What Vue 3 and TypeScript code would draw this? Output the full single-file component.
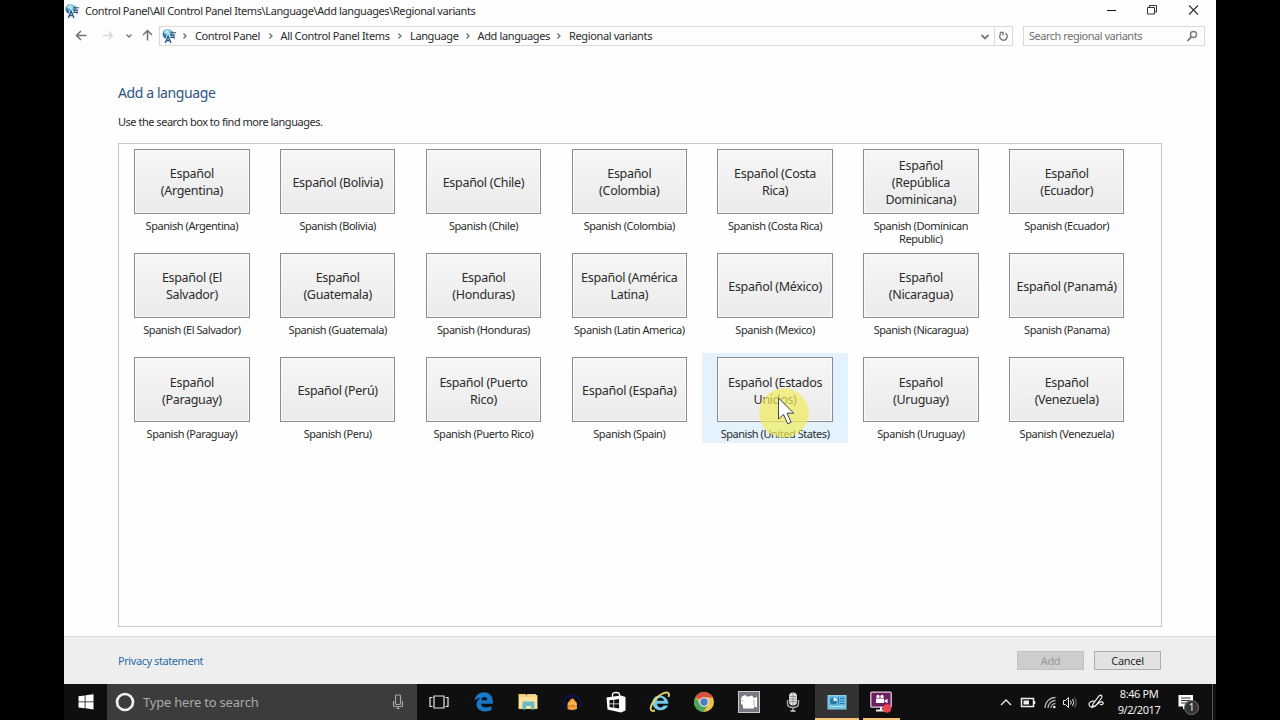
<script setup lang="ts">
interface Variant {
  lines: string[]
  label: string[]
  hover?: boolean
}

const crumbs: { text: string; width: number }[] = [
  { text: 'Control Panel', width: 66.5 },
  { text: 'All Control Panel Items', width: 110.5 },
  { text: 'Language', width: 48.5 },
  { text: 'Add languages', width: 72.5 },
  { text: 'Regional variants', width: 82 },
]

const variants: Variant[] = [
  { lines: ['Español', '(Argentina)'], label: ['Spanish (Argentina)'] },
  { lines: ['Español (Bolivia)'], label: ['Spanish (Bolivia)'] },
  { lines: ['Español (Chile)'], label: ['Spanish (Chile)'] },
  { lines: ['Español', '(Colombia)'], label: ['Spanish (Colombia)'] },
  { lines: ['Español (Costa', 'Rica)'], label: ['Spanish (Costa Rica)'] },
  { lines: ['Español', '(República', 'Dominicana)'], label: ['Spanish (Dominican', 'Republic)'] },
  { lines: ['Español', '(Ecuador)'], label: ['Spanish (Ecuador)'] },
  { lines: ['Español (El', 'Salvador)'], label: ['Spanish (El Salvador)'] },
  { lines: ['Español', '(Guatemala)'], label: ['Spanish (Guatemala)'] },
  { lines: ['Español', '(Honduras)'], label: ['Spanish (Honduras)'] },
  { lines: ['Español (América', 'Latina)'], label: ['Spanish (Latin America)'] },
  { lines: ['Español (México)'], label: ['Spanish (Mexico)'] },
  { lines: ['Español', '(Nicaragua)'], label: ['Spanish (Nicaragua)'] },
  { lines: ['Español (Panamá)'], label: ['Spanish (Panama)'] },
  { lines: ['Español', '(Paraguay)'], label: ['Spanish (Paraguay)'] },
  { lines: ['Español (Perú)'], label: ['Spanish (Peru)'] },
  { lines: ['Español (Puerto', 'Rico)'], label: ['Spanish (Puerto Rico)'] },
  { lines: ['Español (España)'], label: ['Spanish (Spain)'] },
  { lines: ['Español (Estados', 'Unidos)'], label: ['Spanish (United States)'], hover: true },
  { lines: ['Español', '(Uruguay)'], label: ['Spanish (Uruguay)'] },
  { lines: ['Español', '(Venezuela)'], label: ['Spanish (Venezuela)'] },
]
</script>

<template>
  <div class="screen">
    <svg class="defs" width="0" height="0" aria-hidden="true">
      <defs>
        <radialGradient id="globeFill" cx=".6" cy=".3" r=".8">
          <stop offset="0" stop-color="#a9e3f5" />
          <stop offset=".5" stop-color="#3b9cc9" />
          <stop offset="1" stop-color="#1b4f7c" />
        </radialGradient>
        <symbol id="globe" viewBox="0 0 16 16">
          <circle cx="6" cy="6" r="5.3" fill="url(#globeFill)" />
          <path d="M2 3.500q3-2.500 5-1.500l-1 2.500-3 1zM7 7l3-1 0 3-2 1z" fill="#c4e9df" />
          <path d="M9 4.500h6M8.500 7h5.500M9 9.500h5" stroke="#2a5078" stroke-width="1.200" />
          <path d="M11 2.500l2 9" stroke="#456f8d" stroke-width=".8" />
          <path d="M3.500 15.500L6.500 8l3 7.500M4.500 12.800h4" fill="none" stroke="#fff" stroke-width="3" />
          <path d="M3.500 15.500L6.500 8l3 7.500M4.500 12.800h4" fill="none" stroke="#245b8c" stroke-width="1.500" />
        </symbol>
      </defs>
    </svg>

    <main class="window">
      <header class="titlebar">
        <svg class="app-icon" width="15" height="16"><use href="#globe" /></svg>
        <span class="title">Control Panel\All Control Panel Items\Language\Add languages\Regional variants</span>
        <div class="controls">
          <svg width="41" height="20" viewBox="0 0 41 20"><path d="M16 9.500h9" stroke="#111" /></svg>
          <svg width="41" height="20" viewBox="0 0 41 20" fill="none" stroke="#333"><path d="M15.500 6.500h7v6.500h-7zM17.500 6V4.500H24.500v6.500h-2" /></svg>
          <svg width="41" height="20" viewBox="0 0 41 20"><path d="M16 4.500l9 9M25 4.500l-9 9" stroke="#333" stroke-width="1.100" /></svg>
        </div>
      </header>

      <nav class="navbar">
        <svg class="arrows" width="95" height="20" viewBox="0 0 95 20" fill="none">
          <path d="M22.500 10.500H12.500M17 6l-4.500 4.500L17 15" stroke="#707070" stroke-width="1.500" />
          <path d="M38.500 10.500h10M44.500 6.500l4 4-4 4" stroke="#d8d8d8" stroke-width="1.300" />
          <path d="M62.500 9.500l2.500 2.500 2.500-2.500" stroke="#777" stroke-width="1.400" />
          <path d="M83.500 15.500V6M79 10l4.500-4.500L88 10" stroke="#707070" stroke-width="1.500" />
        </svg>
        <div class="address">
          <svg class="address-icon" width="15" height="16"><use href="#globe" /></svg>
          <template v-for="crumb in crumbs" :key="crumb.text">
            <svg class="chevron" width="19" height="18" viewBox="0 0 19 18"><path d="M7.500 6.500L10 9l-2.500 2.500" fill="none" stroke="#666" stroke-width="1.200" /></svg>
            <span class="crumb" :style="{ width: crumb.width + 'px' }">{{ crumb.text }}</span>
          </template>
          <div class="address-end">
            <svg width="18" height="18" viewBox="0 0 18 18"><path d="M5.500 8l3.500 3.500L12.500 8" fill="none" stroke="#777" stroke-width="1.800" /></svg>
            <svg class="refresh" width="18" height="18" viewBox="0 0 18 18" fill="none" stroke="#777" stroke-width="1.500"><path d="M11 6a4 4 0 1 1-4.500.3" /><path d="M5 5.200h3.500v3.300" /></svg>
          </div>
        </div>
        <div class="search">
          <span>Search regional variants</span>
          <svg width="14" height="14" viewBox="0 0 14 14" fill="none" stroke="#777" stroke-width="1.400"><circle cx="8.500" cy="5.500" r="3" /><path d="M6.300 7.800L2.500 12" stroke-width="1.800" /></svg>
        </div>
      </nav>

      <section class="content">
        <h1>Add a language</h1>
        <p class="hint">Use the search box to find more languages.</p>
        <div class="list">
          <div v-for="item in variants" :key="item.label.join(' ')" class="cell" :class="{ hover: item.hover }">
            <div class="tile"><span v-for="line in item.lines" :key="line">{{ line }}</span></div>
            <div class="label"><span v-for="line in item.label" :key="line">{{ line }}</span></div>
            <svg v-if="item.hover" class="pointer" width="52" height="50" viewBox="0 0 52 50">
              <circle cx="25" cy="25" r="24.700" fill="#f1ed5c" opacity=".7" />
              <path d="M19.500 10v21l5-4.500 4.200 9.300 3.500-1.600-4.200-9h6.800z" fill="#fff" stroke="#444" />
            </svg>
          </div>
        </div>
      </section>

      <footer class="footer">
        <a class="privacy">Privacy statement</a>
        <button class="btn disabled" disabled>Add</button>
        <button class="btn">Cancel</button>
      </footer>
    </main>

    <div class="taskbar">
      <div class="start">
        <svg width="16" height="16" viewBox="0 0 16 16" fill="#fff"><path d="M.5 2.300L6.700 1.400v6H.5zM7.500 1.300L15.500.2v7.200h-8zM.5 8.200h6.200v6L.5 13.400zM7.500 8.200h8v7.200l-8-1.100z" /></svg>
      </div>
      <div class="cortana">
        <svg width="20" height="20" viewBox="0 0 20 20"><circle cx="10" cy="10" r="8" fill="none" stroke="#eee" stroke-width="2.700" /></svg>
        <span>Type here to search</span>
        <svg class="mic" width="12" height="18" viewBox="0 0 12 18" fill="none" stroke="#a5a5a5" stroke-width="1.200"><rect x="3.500" y="2" width="5" height="9.500" rx="1" /><path d="M1.500 8v4.500q0 1 1 1h7q1 0 1-1V8M6 13.500V16M4.500 15.500h3" /></svg>
      </div>

      <div class="apps">
        <div class="app"><svg width="22" height="22" viewBox="0 0 22 22" fill="none" stroke="#e8e8e8" stroke-width="1.200"><path d="M6 5h10v12H6zM4.500 6.500H2v9h2.500M17.500 6.500H20v9h-2.500" /></svg></div>
        <div class="app nudge"><svg width="22" height="22" viewBox="0 0 22 22"><path d="M1.500 10C2.300 4.300 6.200 1.300 11 1.300c5.500 0 9 4 8.800 9.200v2.200H8c.2 4.100 6.200 5 10.400 2.400v4C13 22 3.500 20.500 3.500 13.200c0-2.800 1.700-5 4.200-6.200C4.800 7.200 2.700 8.300 1.500 10zM8.200 9.300h6.100c0-4.700-5.600-4.200-6.100 0z" fill="#1878c8" fill-rule="evenodd" /></svg></div>
        <div class="app folder"><svg width="22" height="22" viewBox="0 0 22 22"><path d="M1.500 3h7l1 1h11v14h-19z" fill="#f3cd78" /><path d="M2 6h18v11.500H2z" fill="#fbe0a0" /><path d="M5.500 18.500v-7q0-1 1-1h10q1 0 1 1v7h-3.500v-3.500h-5v3.500z" fill="#69b9c8" /><path d="M10 3.700h9" stroke="#fff5d6" /></svg></div>
        <div class="app"><svg width="22" height="22" viewBox="0 0 22 22"><path d="M4 17C0 9 5 4.500 11 4.500s11 4.500 7 12.500" fill="none" stroke="#0d1052" stroke-width="1.800" /><path d="M6.500 18v-5q0-2 2-3 1-2.500 3-2.500t2.500 2.500q2 1 2 3v5q-5 2-9.500 0z" fill="#f3a33a" /><path d="M8.500 12v4M10.500 10v3M12.500 10v3M14.500 12v4" stroke="#ffc966" /><path d="M7 15h9" stroke="#bd5a20" stroke-width=".8" /></svg></div>
        <div class="app"><svg width="22" height="22" viewBox="0 0 22 22"><path d="M7.500 6V3.500q0-2 3.500-2t3.500 2V6" fill="none" stroke="#fff" stroke-width="1.300" /><path d="M1.500 6.500L16 4.500V21.500L2.500 18.500zM16 4.500l4.500 1.500v13.500l-4.500 2z" fill="#fff" /><path d="M4.500 9.300l3.900-.5v3.600H4.500zM9.200 8.700l4.800-.6v4.300H9.200zM4.500 13.200h3.900v3.500l-3.900-.6zM9.200 13.200H14v4.400l-4.800-.8z" fill="#111" /></svg></div>
        <div class="app"><svg width="22" height="22" viewBox="0 0 22 22"><path d="M19.500 12.700H8c.4 4.300 5 4.800 6.600 1.800h4.500C16.500 21.500 3.500 21 3.500 11.500S18.500 2 19.500 12.700zM8 9.700h7c-.6-3.800-6.400-3.800-7 0z" fill="#72c9ea" fill-rule="evenodd" /><path d="M6 19.500C1 21 .5 17.500 3.500 12 7.500 5.500 15 .8 18.500 1.700c1.800.5 1.800 2.300 1 4.300" fill="none" stroke="#e6d36a" stroke-width="1.900" /></svg></div>
        <div class="app"><svg width="22" height="22" viewBox="0 0 22 22"><circle cx="11" cy="11" r="10" fill="#efc04b" /><path d="M11 11L2.400 6A10 10 0 0 1 19.900 6.500H11z" fill="#d9503f" /><path d="M2.400 6A10 10 0 0 0 10.500 21L15 13.200H7z" fill="#4ba55d" /><circle cx="11" cy="11" r="4.800" fill="#eee" /><circle cx="11" cy="11" r="3.700" fill="#477fc8" /></svg></div>
        <div class="app nudge"><svg width="22" height="22" viewBox="0 0 22 22"><rect x=".5" y=".5" width="21" height="21" fill="#777a82" stroke="#c9cad0" /><path d="M3 8l1-2.500 3-1.500 2 1.500h2l3-1 2 2.500 3-1v10.500l-3-1v2H5V14L3 13z" fill="#fff" /><path d="M3.500 9.500h2M16 8.500v6" stroke="#a9abb2" /></svg></div>
        <div class="app"><svg width="22" height="22" viewBox="0 0 22 22"><rect x="7" y="1.500" width="8" height="13" rx="4" fill="#ddd" /><path d="M7.500 5.500h7M7.500 8h7M7.500 10.500h7M11 2v12" stroke="#888" stroke-width=".8" /><path d="M5.500 9v3.500q0 4 5.500 4t5.500-4V9M11 16.500V20" fill="none" stroke="#aaa" stroke-width="1.400" /><path d="M8.500 20h5" stroke="#ccc" stroke-width="1.500" /></svg></div>
        <div class="app active"><svg width="22" height="22" viewBox="0 0 22 22"><rect x="2" y="4.500" width="18" height="13.500" fill="#68bce2" stroke="#8fd0ec" /><circle cx="7.500" cy="10" r="3.500" fill="#2878aa" /><path d="M7.500 10V6.500A3.500 3.500 0 0 1 11 10z" fill="#e6f7ff" /><path d="M14 7.500h4.500M14 10h4.500M14 12.500h4.500" stroke="#2878aa" stroke-width="1.200" /><path d="M4 15.500h14" stroke="#b9e4f5" /><path d="M12.500 6.500v7" stroke="#2878aa" /></svg></div>
        <div class="app running"><svg width="24" height="22" viewBox="0 0 24 22"><rect x="1.800" y="1.200" width="20.400" height="15" rx="1" fill="#701e62" stroke="#e3c9df" stroke-width="1.300" /><path d="M12 16v3M7 19.500h10" stroke="#eee" stroke-width="2" /><circle cx="9" cy="5.500" r="1.700" fill="#fff" /><circle cx="13" cy="5.500" r="1.700" fill="#fff" /><path d="M7 7.500h8v4.500H7zM15.500 9.500l3-1.700v4.500l-3-1.700z" fill="#fff" /><circle cx="18" cy="17.500" r="4.300" fill="#e8454e" /></svg></div>
      </div>

      <div class="tray">
        <svg width="105" height="36" viewBox="0 0 105 36" fill="none" stroke="#eee">
          <path d="M1 21l5-5 5 5" stroke-width="1.300" />
          <rect x="21.500" y="14.500" width="12" height="8" stroke-width="1.500" /><path d="M34.500 17v3" stroke-width="1.500" /><path d="M23.500 16.500h5.500v4h-5.500z" fill="#eee" stroke="none" />
          <path d="M45 24A10.500 10.500 0 0 1 55.500 13.500M48 24a7.500 7.500 0 0 1 7.500-7.500M51 24a4.500 4.500 0 0 1 4.500-4.500" stroke="#aaa" stroke-width="1.300" /><circle cx="54.300" cy="23" r="1.300" fill="#eee" stroke="none" />
          <path d="M63.500 16.500h2l3-3v10l-3-3h-2zM70.500 16.500q1.500 2 0 4M72.500 15q2.500 3.500 0 7" /><path d="M74.500 13.500q3.500 5 0 10" stroke="#777" />
          <path d="M92 23.500l1-3.500 6-8q1.500-1.500 2.500-.5t0 2.500l-6 8zM95 17.500c-3.500-1-6.500 1-6 3.500s4.500 2.500 8-.5 5-3.500 6-2-1 2.500-3 2" stroke-width="1.200" />
        </svg>
        <div class="clock"><span>8:46 PM</span><span>9/2/2017</span></div>
        <div class="notice">
          <svg width="18" height="18" viewBox="0 0 18 18"><path d="M1.500 2h14.500v11.500H9l-3 3v-3H1.500z" fill="#fff" /><path d="M4 5h9.500M4 7.500h9.500M4 10h6" stroke="#333" /></svg>
          <span class="badge">1</span>
        </div>
        <div class="peek"></div>
      </div>
    </div>
  </div>
</template>

<style>
body {
  background: #000;
  overflow: hidden;
}
</style>

<style scoped>
.screen {
  width: 1152px;
  height: 720px;
  margin: 0 64px;
  display: flex;
  flex-direction: column;
  font-family: "Noto Sans", "Open Sans", sans-serif;
  font-size: 11px;
  color: #2b2b2b;
  white-space: nowrap;
}
.screen * { box-sizing: border-box; }
.defs { position: absolute; }
svg { display: block; flex: none; }
.window {
  height: 684px;
  background: #fefefe;
  display: flex;
  flex-direction: column;
}
.titlebar {
  height: 21px;
  display: flex;
  align-items: center;
  padding-left: 1px;
}
.title {
  margin-left: 5px;
  line-height: 20px;
  letter-spacing: -0.4px;
}
.controls {
  display: flex;
  margin-left: auto;
  margin-right: 2px;
}
.navbar {
  height: 28px;
  display: flex;
  padding-top: 5px;
}
.arrows { margin-top: -1px; }
.address {
  width: 854px;
  height: 20px;
  border: 1px solid #d9d9d9;
  display: flex;
  align-items: center;
  padding-left: 2px;
  letter-spacing: -0.37px;
}
.address-icon { margin-right: -1px; }
.crumb { line-height: 18px; }
.address-end {
  display: flex;
  margin-left: auto;
}
.refresh { border-left: 1px solid #d9d9d9; }
.search {
  width: 182px;
  height: 20px;
  margin-left: 10px;
  border: 1px solid #d9d9d9;
  display: flex;
  align-items: center;
  justify-content: space-between;
  padding: 0 5px;
  color: #707070;
  letter-spacing: -0.48px;
}
.search span { line-height: 18px; padding-bottom: 1px; }
.content {
  flex: 1;
  padding: 33px 54px 0;
}
h1 {
  margin: 0;
  font-size: 14px;
  line-height: 22px;
  font-weight: 400;
  letter-spacing: -0.4px;
  color: #2f5482;
}
.hint {
  margin: 8px 0 12px;
  line-height: 19px;
  letter-spacing: -0.48px;
}
.list {
  width: 1044px;
  height: 484px;
  border: 1px solid #c6c9cc;
  display: grid;
  grid-template-columns: repeat(7, 145.800px);
  grid-auto-rows: 104.400px;
  align-content: start;
}
.cell {
  height: 90px;
  padding-top: 4.600px;
  display: flex;
  flex-direction: column;
  align-items: center;
  position: relative;
}
.hover { background: #e3f2fc; }
.tile {
  width: 115.400px;
  height: 65px;
  flex: none;
  border: 1px solid #8c8c8c;
  box-shadow: inset 0 0 0 1px #fafafa;
  background: linear-gradient(#f6f6f6, #ebebeb);
  display: flex;
  flex-direction: column;
  align-items: center;
  justify-content: center;
  font-size: 12.500px;
  line-height: 17px;
  letter-spacing: -0.3px;
  padding-top: 2px;
}
.label {
  display: flex;
  flex-direction: column;
  align-items: center;
  margin-top: 5px;
  line-height: 13.500px;
  letter-spacing: -0.45px;
}
.pointer {
  position: absolute;
  left: 57px;
  top: 35px;
}
.footer {
  height: 48px;
  border-top: 1px solid #d9d9d9;
  background: #eee;
  display: flex;
  align-items: center;
  padding: 0 55px 1px 54px;
  gap: 10px;
}
.privacy {
  margin-right: auto;
  letter-spacing: -0.43px;
  color: #2a6ca6;
}
.btn {
  width: 67px;
  height: 19px;
  padding: 0;
  border: 1px solid #adadad;
  background: #e2e2e2;
  font: inherit;
  line-height: 17px;
  letter-spacing: -0.3px;
  color: #2b2b2b;
}
.disabled {
  border-color: #c2c2c2;
  background: #cdcdcd;
  color: #9a9a9a;
}
.taskbar {
  height: 36px;
  background: #0f0f0f;
  display: flex;
}
.start {
  width: 43px;
  display: flex;
  align-items: center;
  justify-content: center;
}
.cortana {
  width: 310px;
  background: #3c3c3c;
  display: flex;
  align-items: center;
  padding: 0 13px 0 8px;
  color: #aaa;
  font-size: 13px;
  letter-spacing: -0.22px;
}
.cortana span { margin-left: 8px; }
.mic { margin-left: auto; }
.apps { display: flex; }
.app {
  width: 44.200px;
  height: 36px;
  display: flex;
  align-items: center;
  justify-content: center;
}
.nudge { padding-left: 2px; }
.folder { padding-left: 2px; }
.active {
  background: #333;
  border-bottom: 2px solid #f5c277;
  padding-top: 2px;
}
.running {
  border-bottom: 2px solid #f5c277;
  padding-top: 2px;
  width: 37px;
  margin-left: 4px;
}
.tray {
  margin-left: auto;
  display: flex;
  align-items: center;
  color: #f2f2f2;
}
.clock {
  width: 60px;
  margin-left: 4px;
  display: flex;
  flex-direction: column;
  align-items: center;
  line-height: 16px;
  letter-spacing: -0.4px;
}
.notice {
  position: relative;
  width: 22px;
  margin-left: 8px;
}
.badge {
  position: absolute;
  left: 7px;
  top: 7px;
  width: 15px;
  height: 15px;
  border: 1px solid #777;
  border-radius: 50%;
  background: #333;
  font-size: 10px;
  line-height: 13px;
  text-align: center;
}
.peek {
  width: 4px;
  height: 36px;
  margin-left: 13px;
  border-left: 1px solid #555;
}
</style>
